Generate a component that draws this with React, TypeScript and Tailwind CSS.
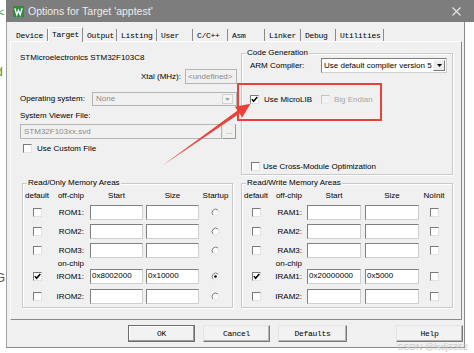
import React from "react";

function Check({ checked = false, disabled = false }: { checked?: boolean; disabled?: boolean }) {
  return (
    <span
      className={`relative inline-flex shrink-0 w-[9px] h-[9px] border ${
        disabled
          ? "bg-[#f3f3f3] border-t-[#c4c4c4] border-l-[#c4c4c4] border-r-[#ebebeb] border-b-[#ebebeb]"
          : "bg-white border-t-[#7a7a7a] border-l-[#7a7a7a] border-r-[#e2e2e2] border-b-[#e2e2e2]"
      }`}
    >
      {checked && (
        <svg className="absolute left-0 top-0" width="7" height="7" viewBox="0 0 7 7">
          <path d="M0.9 3.1 L2.6 5.3 L6.3 0.9" fill="none" stroke="#000" strokeWidth="1.5" />
        </svg>
      )}
    </span>
  );
}

function Radio({ on = false }: { on?: boolean }) {
  return (
    <svg width="9" height="9" viewBox="0 0 9 9">
      <circle cx="4.5" cy="4.5" r="3.5" fill="#fbfbfb" />
      <path d="M6.97 2.03 A3.5 3.5 0 0 0 2.03 6.97" stroke="#7a7a7a" strokeWidth="1" fill="none" />
      <path d="M6.97 2.03 A3.5 3.5 0 0 1 2.03 6.97" stroke="#e2e2e2" strokeWidth="1" fill="none" />
      {on && <circle cx="4.5" cy="4.5" r="1.3" fill="#000" />}
    </svg>
  );
}

const fieldCls =
  "h-[15px] bg-white border border-t-[#7f7f7f] border-l-[#7f7f7f] border-r-[#cfcfcf] border-b-[#cfcfcf] pl-[1px] pt-[1px] leading-[10px] whitespace-nowrap overflow-hidden";

function LeftRow({ label, start = "", size = "", def = false, on = false, mt }: { label: string; start?: string; size?: string; def?: boolean; on?: boolean; mt: string }) {
  return (
    <div className={`${mt} h-[15px] flex items-center`}>
      <span className="w-[28px] flex justify-center">
        <Check checked={def} />
      </span>
      <span className="w-[39px] text-right pr-[6px]">{label}</span>
      <div className={`w-[53px] ${fieldCls}`}>{start}</div>
      <div className={`ml-[3px] w-[53px] ${fieldCls}`}>{size}</div>
      <span className="w-[33px] flex justify-center">
        <Radio on={on} />
      </span>
    </div>
  );
}

function RightRow({ label, start = "", size = "", def = false, mt }: { label: string; start?: string; size?: string; def?: boolean; mt: string }) {
  return (
    <div className={`${mt} h-[15px] flex items-center`}>
      <span className="w-[28px] flex justify-center">
        <Check checked={def} />
      </span>
      <span className="w-[37px] text-right pr-[5px]">{label}</span>
      <div className={`w-[54px] ${fieldCls}`}>{start}</div>
      <div className={`ml-[4px] w-[54px] ${fieldCls}`}>{size}</div>
      <span className="w-[33px] flex justify-center pr-[3px]">
        <Check />
      </span>
    </div>
  );
}

const groupCls =
  "relative border border-[#c9c9c9] shadow-[1px_1px_0_#ffffff,inset_1px_1px_0_#ffffff]";

const tabs: { t: string; w: string; sel?: boolean }[] = [
  { t: "Device", w: "w-[36px]" },
  { t: "Target", w: "w-[35px]", sel: true },
  { t: "Output", w: "w-[34px]" },
  { t: "Listing", w: "w-[40px]" },
  { t: "User", w: "w-[36px]" },
  { t: "C/C++", w: "w-[35px]" },
  { t: "Asm", w: "w-[37px]" },
  { t: "Linker", w: "w-[36px]" },
  { t: "Debug", w: "w-[35px]" },
  { t: "Utilities", w: "w-[48px]" },
];

function Btn({ label, cls, def = false }: { label: string; cls: string; def?: boolean }) {
  return (
    <div
      className={`${cls} h-[17px] flex items-center justify-center bg-[#f2f2f2] font-['Liberation_Mono',monospace] text-[8px] tracking-[-0.3px] leading-[9px] text-black border ${
        def
          ? "border-[#6e6e6e] shadow-[inset_-1px_-1px_0_#9a9a9a,inset_1px_1px_0_#ffffff]"
          : "border-t-[#e4e4e4] border-l-[#e4e4e4] border-r-[#7a7a7a] border-b-[#7a7a7a] shadow-[inset_-1px_-1px_0_#b4b4b4]"
      }`}
    >
      {label}
    </div>
  );
}

export default function App() {
  return (
    <div className="relative w-[474px] h-[353px] overflow-hidden bg-white font-['Liberation_Sans',Arial,sans-serif] text-[8px] leading-[10px] text-black">
      {/* content behind the dialog, partly hidden by it */}
      <span className="absolute left-[-2px] top-[6px] text-[11px] leading-[12px] text-[#3d9a3d]">&lt;</span>
      <span className="absolute left-[-4px] top-[65px] text-[12px] leading-[14px] text-[#3d8f3d]">d</span>
      <span className="absolute left-[-5px] top-[271px] text-[13px] leading-[14px] text-[#555]">G</span>

      {/* title bar */}
      <div className="ml-[6px] h-[22px] w-[468px] bg-[#7d7d7d] flex items-center">
        <svg className="ml-[7px]" width="11" height="11" viewBox="0 0 11 11">
          <rect width="11" height="11" fill="#2f8c3d" />
          <path d="M1.8 2.3 L3.8 8.8 L5.5 4.4 L7.2 8.8 L9.2 2.3" stroke="#fff" strokeWidth="1.3" fill="none" />
        </svg>
        <span className="ml-[4px] text-[10.5px] leading-[12px] text-[#ececec]">Options for Target 'apptest'</span>
        <svg className="ml-auto mr-[13px]" width="9" height="9" viewBox="0 0 9 9">
          <path d="M0.5 0.5 L8.5 8.5 M8.5 0.5 L0.5 8.5" stroke="#e6e6e6" strokeWidth="1.1" />
        </svg>
      </div>

      {/* dialog body */}
      <div className="ml-[6px] w-[459px] h-[326px] bg-[#f0f0f0] border-l border-r border-b border-l-[#a0a0a0] border-r-[#8a8a8a] border-b-[#8a8a8a] flex flex-col">
        {/* tabs */}
        <div className="h-[19px] pl-[5px] flex items-end font-['Liberation_Mono',monospace] text-[8px] tracking-[-0.3px] leading-[9px]">
          {tabs.map((tb) =>
            tb.sel ? (
              <div
                key={tb.t}
                className={`${tb.w} relative z-10 h-[15px] -mb-[1px] pl-[3px] pb-[2px] flex items-center bg-[#f0f0f0] border-t border-l border-r border-t-white border-l-white border-r-[#8a8a8a]`}
              >
                {tb.t}
              </div>
            ) : (
              <div key={tb.t} className={`${tb.w} h-[12px] pl-[4px] flex items-center border-r border-r-[#8a8a8a]`}>
                {tb.t}
              </div>
            )
          )}
        </div>

        {/* panel */}
        <div className="ml-[3px] w-[452px] h-[279px] border border-t-white border-l-white border-r-[#8a8a8a] border-b-[#8a8a8a] flex flex-col">
          {/* top section */}
          <div className="flex items-start">
            {/* left column */}
            <div className="ml-[9px] w-[217px] flex flex-col">
              <div className="mt-[10px] h-[11px] leading-[11px]">STMicroelectronics STM32F103C8</div>
              <div className="mt-[6px] h-[15px] flex items-center justify-end">
                <span>Xtal (MHz):</span>
                <div className="ml-[4px] w-[52px] h-[15px] bg-[#f0f0f0] border border-[#b4b4b4] pl-[2px] flex items-center text-[#8c8c8c]">
                  &lt;undefined&gt;
                </div>
              </div>
              <div className="mt-[8px] h-[14px] flex items-center">
                <span className="w-[72px]">Operating system:</span>
                <div className="w-[145px] h-[14px] bg-[#f0f0f0] border border-[#b4b4b4] pl-[3px] flex items-center text-[#8c8c8c]">
                  <span className="flex-1">None</span>
                  <span className="w-[11px] h-[10px] mr-[3px] border border-[#d2d2d2] bg-[#f4f4f4] flex items-center justify-center">
                    <svg width="5" height="3" viewBox="0 0 5 3">
                      <path d="M0 0 L5 0 L2.5 3 Z" fill="#a6a6a6" />
                    </svg>
                  </span>
                </div>
              </div>
              <div className="mt-[4px] h-[11px] leading-[11px]">System Viewer File:</div>
              <div className="mt-[3px] h-[15px] flex">
                <div className="w-[202px] h-[15px] bg-[#f0f0f0] border border-[#b4b4b4] pl-[3px] flex items-center text-[#8c8c8c]">
                  STM32F103xx.svd
                </div>
                <div className="w-[14px] h-[15px] border border-t-[#e6e6e6] border-l-[#e6e6e6] border-r-[#9a9a9a] border-b-[#9a9a9a] flex items-center justify-center text-[#8c8c8c] leading-[8px]">
                  ...
                </div>
              </div>
              <div className="mt-[5px] h-[9px] flex items-center">
                <span className="ml-[3px] flex">
                  <Check />
                </span>
                <span className="ml-[5px]">Use Custom File</span>
              </div>
            </div>

            {/* Code Generation group */}
            <div className={`ml-[4px] mt-[11px] w-[212px] h-[122px] flex flex-col ${groupCls}`}>
              <span className="absolute left-[4px] top-[-6px] px-[1px] bg-[#f0f0f0] leading-[10px]">Code Generation</span>
              <div className="mt-[4px] h-[15px] flex items-center">
                <span className="ml-[8px] w-[71px]">ARM Compiler:</span>
                <div className="w-[126px] h-[15px] bg-white border border-t-[#7f7f7f] border-l-[#7f7f7f] border-r-[#cfcfcf] border-b-[#cfcfcf] pl-[2px] flex items-center">
                  <span className="flex-1 whitespace-nowrap">Use default compiler version 5</span>
                  <span className="w-[12px] h-[11px] mr-[1px] border border-t-[#f4f4f4] border-l-[#f4f4f4] border-r-[#7a7a7a] border-b-[#7a7a7a] bg-[#ececec] flex items-center justify-center">
                    <svg width="5" height="3" viewBox="0 0 5 3">
                      <path d="M0 0 L5 0 L2.5 3 Z" fill="#000" />
                    </svg>
                  </span>
                </div>
              </div>
              <div className="mt-[22px] h-[9px] flex items-center">
                <span className="ml-[8px] w-[71px] flex items-center">
                  <Check checked />
                  <span className="ml-[5px] whitespace-nowrap">Use MicroLIB</span>
                </span>
                <Check disabled />
                <span className="ml-[4px] text-[#a8a8a8] whitespace-nowrap">Big Endian</span>
              </div>
              <div className="mt-[58px] h-[9px] flex items-center">
                <span className="ml-[9px] flex">
                  <Check />
                </span>
                <span className="ml-[3px] whitespace-nowrap">Use Cross-Module Optimization</span>
              </div>
            </div>
          </div>

          {/* memory areas */}
          <div className="mt-[8px] flex items-start">
            <div className={`ml-[11px] w-[211px] h-[125px] flex flex-col ${groupCls}`}>
              <span className="absolute left-[4px] top-[-6px] px-[1px] bg-[#f0f0f0] leading-[10px]">Read/Only Memory Areas</span>
              <div className="mt-[6px] h-[12px] flex items-center">
                <span className="w-[28px] text-center">default</span>
                <span className="w-[39px] text-right pr-[6px]">off-chip</span>
                <span className="w-[53px] text-center">Start</span>
                <span className="ml-[3px] w-[53px] text-center">Size</span>
                <span className="w-[33px] text-center">Startup</span>
              </div>
              <LeftRow mt="mt-[3px]" label="ROM1:" />
              <LeftRow mt="mt-[4px]" label="ROM2:" />
              <LeftRow mt="mt-[4px]" label="ROM3:" />
              <div className="h-[11px] flex items-center">
                <span className="w-[28px]" />
                <span className="w-[39px] text-right pr-[6px]">on-chip</span>
              </div>
              <LeftRow mt="mt-0" label="IROM1:" start="0x8002000" size="0x10000" def on />
              <LeftRow mt="mt-[5px]" label="IROM2:" />
            </div>

            <div className={`ml-[8px] w-[212px] h-[125px] flex flex-col ${groupCls}`}>
              <span className="absolute left-[4px] top-[-6px] px-[1px] bg-[#f0f0f0] leading-[10px]">Read/Write Memory Areas</span>
              <div className="mt-[6px] h-[12px] flex items-center">
                <span className="w-[28px] text-center">default</span>
                <span className="w-[37px] text-right pr-[5px]">off-chip</span>
                <span className="w-[54px] text-center">Start</span>
                <span className="ml-[4px] w-[54px] text-center">Size</span>
                <span className="w-[33px] text-center pr-[3px]">NoInit</span>
              </div>
              <RightRow mt="mt-[3px]" label="RAM1:" />
              <RightRow mt="mt-[4px]" label="RAM2:" />
              <RightRow mt="mt-[4px]" label="RAM3:" />
              <div className="h-[11px] flex items-center">
                <span className="w-[28px]" />
                <span className="w-[37px] text-right pr-[5px]">on-chip</span>
              </div>
              <RightRow mt="mt-0" label="IRAM1:" start="0x20000000" size="0x5000" def />
              <RightRow mt="mt-[5px]" label="IRAM2:" />
            </div>
          </div>
        </div>

        {/* buttons */}
        <div className="mt-[5px] h-[17px] flex">
          <Btn label="OK" cls="ml-[121px] w-[67px]" def />
          <Btn label="Cancel" cls="ml-[8px] w-[67px]" />
          <Btn label="Defaults" cls="ml-[8px] w-[69px]" />
          <Btn label="Help" cls="ml-[49px] w-[67px]" />
        </div>
      </div>

      {/* annotation overlays */}
      <div className="absolute left-[237px] top-[83px] w-[145px] h-[38px] border-2 border-[#e8403a]" />
      <svg className="absolute left-0 top-0 pointer-events-none" width="474" height="353" viewBox="0 0 474 353">
        <polygon points="162.5,165.5 239.6,113.6 242.2,117.4 250.5,103.8 234.8,106.8 237.6,110.6" fill="#e8403a" />
      </svg>
      <span className="absolute left-[397px] top-[342px] text-[9px] leading-[10px] text-[#c8c8c8] whitespace-nowrap">
        CSDN @lsdj3362
      </span>
    </div>
  );
}
